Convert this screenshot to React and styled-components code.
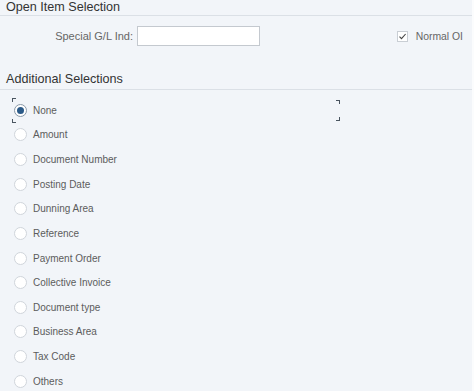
import React, { useState } from 'react';
import styled, { createGlobalStyle } from 'styled-components';

const GlobalStyle = createGlobalStyle`
  html, body {
    margin: 0;
    padding: 0;
    background: #f2f5f9;
  }
  body {
    font-family: "Liberation Sans", Arial, sans-serif;
  }
`;

const Page = styled.div`
  width: 474px;
  height: 391px;
  background: #f2f5f9;
  overflow: hidden;
  box-sizing: border-box;
  border-right: 2px solid #fbfcfd;
`;

const SectionTitle = styled.div`
  height: ${props => props.h}px;
  padding: 0 0 0 6px;
  margin-top: ${props => props.top || 0}px;
  border-bottom: 1px solid #dbe0e6;
  font-size: 12.6px;
  line-height: 15px;
  color: #333;
  display: flex;
  align-items: flex-end;
  padding-bottom: ${props => props.pb || 0}px;
  box-sizing: content-box;
`;

const FormRow = styled.div`
  display: flex;
  align-items: center;
  margin-top: 10px;
  height: 20px;
`;

const Label = styled.label`
  width: 133px;
  text-align: right;
  font-size: 11px;
  color: #666;
  margin-right: 4px;
`;

const TextInput = styled.input`
  width: 123px;
  height: 20px;
  box-sizing: border-box;
  border: 1px solid #c4c9cf;
  background: #fff;
  padding: 0 4px;
  font-family: inherit;
  font-size: 11px;
  outline: none;
`;

const CheckWrap = styled.label`
  margin-left: auto;
  margin-right: 9px;
  display: flex;
  align-items: center;
  gap: 8px;
  font-size: 10.4px;
  color: #666;
`;

const CheckBox = styled.span`
  width: 11px;
  height: 11px;
  box-sizing: border-box;
  border: 1px solid #c9ced4;
  background: #fff;
  display: flex;
  align-items: center;
  justify-content: center;
`;

const List = styled.div`
  padding-top: 8px;
`;

const Row = styled.div`
  position: relative;
  height: 24.64px;
  display: flex;
  align-items: center;
  padding-left: 14px;
  font-size: 10px;
  color: #5c5c5c;
  cursor: pointer;
`;

const Radio = styled.span`
  width: 13px;
  height: 13px;
  box-sizing: border-box;
  border-radius: 50%;
  border: 1px solid ${props => (props.checked ? '#8a99a8' : '#d0d5db')};
  background: #fff;
  margin-right: 6px;
  display: flex;
  align-items: center;
  justify-content: center;

  &::after {
    content: '';
    width: 7px;
    height: 7px;
    border-radius: 50%;
    background: ${props => (props.checked ? '#2b5a88' : 'transparent')};
  }
`;

const Corner = styled.span`
  position: absolute;
  width: 3px;
  height: 3px;
  border-color: #4a5560;
  border-style: solid;
  border-width: 0;
  ${props => props.pos === 'tl' && 'left: 12px; top: 0; border-left-width: 1px; border-top-width: 1px;'}
  ${props => props.pos === 'bl' && 'left: 12px; bottom: 0; border-left-width: 1px; border-bottom-width: 1px;'}
  ${props => props.pos === 'tr' && 'left: 336px; top: 2px; border-right-width: 1px; border-top-width: 1px;'}
  ${props => props.pos === 'br' && 'left: 336px; bottom: 2px; border-right-width: 1px; border-bottom-width: 1px;'}
`;

const options = [
  'None',
  'Amount',
  'Document Number',
  'Posting Date',
  'Dunning Area',
  'Reference',
  'Payment Order',
  'Collective Invoice',
  'Document type',
  'Business Area',
  'Tax Code',
  'Others'
];

const App = () => {
  const [selected, setSelected] = useState('None');

  return (
    <Page>
      <GlobalStyle />
      <SectionTitle h={15}>Open Item Selection</SectionTitle>
      <FormRow>
        <Label>Special G/L Ind:</Label>
        <TextInput type="text" />
        <CheckWrap>
          <CheckBox>
            <svg width="9" height="9" viewBox="0 0 9 9">
              <path d="M1.5 4.6 L3.5 6.6 L7.6 2" fill="none" stroke="#444" strokeWidth="1.1" />
            </svg>
          </CheckBox>
          Normal OI
        </CheckWrap>
      </FormRow>
      <SectionTitle h={15} top={26} pb={2}>Additional Selections</SectionTitle>
      <List>
        {options.map(opt => (
          <Row key={opt} onClick={() => setSelected(opt)}>
            {opt === selected && (
              <>
                <Corner pos="tl" />
                <Corner pos="bl" />
                <Corner pos="tr" />
                <Corner pos="br" />
              </>
            )}
            <Radio checked={opt === selected} />
            {opt}
          </Row>
        ))}
      </List>
    </Page>
  );
};

export default App;
